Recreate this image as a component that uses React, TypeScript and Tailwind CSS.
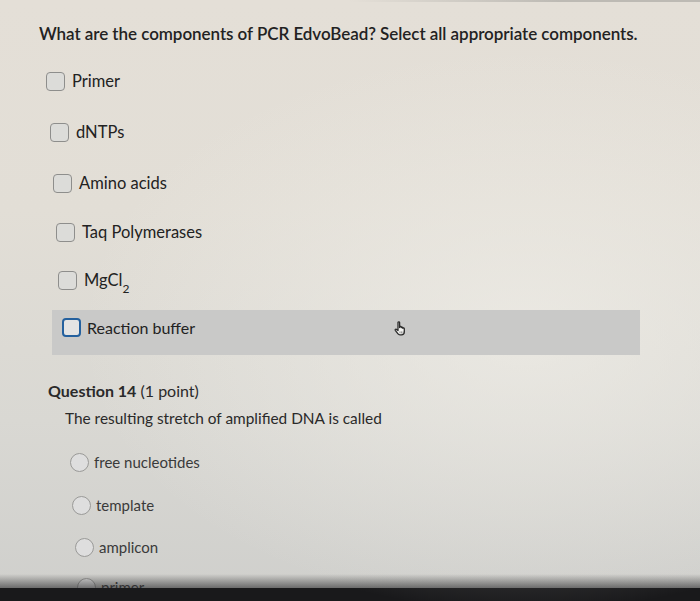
import React from 'react';

type Choice = { label: React.ReactNode; indent: string; gap: string };

const components: Choice[] = [
  { label: 'Primer', indent: 'ml-[46px]', gap: 'mt-[26px]' },
  { label: 'dNTPs', indent: 'ml-[50px]', gap: 'mt-[32px]' },
  { label: 'Amino acids', indent: 'ml-[53px]', gap: 'mt-[32px]' },
  { label: 'Taq Polymerases', indent: 'ml-[56px]', gap: 'mt-[30px]' },
  {
    label: (
      <>
        MgCl<sub className="text-[12px] align-[-4px]">2</sub>
      </>
    ),
    indent: 'ml-[58px]',
    gap: 'mt-[29px]',
  },
];

const answers = [
  { label: 'free nucleotides', indent: 'ml-[70px]', gap: 'mt-[25px]' },
  { label: 'template', indent: 'ml-[72px]', gap: 'mt-[24px]' },
  { label: 'amplicon', indent: 'ml-[75px]', gap: 'mt-[23px]' },
  { label: 'primer', indent: 'ml-[77px]', gap: 'mt-[21px]' },
];

const Checkbox = ({ focused = false }: { focused?: boolean }) => (
  <span
    className={
      focused
        ? 'h-[19px] w-[19px] shrink-0 rounded-[4px] border-2 border-[#24609e] bg-[#e4e4e4]'
        : 'h-[19px] w-[19px] shrink-0 rounded-[4px] border border-[#8e8e8c] bg-[#dcdcd9]'
    }
  />
);

const Radio = () => (
  <span className="h-[19px] w-[19px] shrink-0 rounded-full border border-[#9a9a98] bg-[#dedede]" />
);

// pointing-hand cursor resting on the hovered row
const HandCursor = () => (
  <svg width="14" height="15" viewBox="0 0 14 15" className="absolute left-[394px] top-[319px]">
    <path
      d="M4 1.5c0-.9 1.6-.9 1.6 0v5l.2-.6c.4-.7 1.5-.5 1.5.3v.5c.4-.7 1.5-.6 1.5.2v.4c.4-.6 1.5-.5 1.5.3v3.4c0 1.6-1.2 2.8-2.8 2.8H6c-1 0-1.7-.5-2.2-1.2L1.3 9.3c-.5-.7.3-1.5 1-1L4 9.6V1.5z"
      fill="#f4f4f2"
      stroke="#2b2b2b"
      strokeWidth="1.3"
      strokeLinejoin="round"
    />
    <path d="M6 10.4v2M7.6 10.4v2M9.2 10.4v2" stroke="#666" strokeWidth="0.7" />
  </svg>
);

export default function App() {
  return (
    <div className="relative flex h-[601px] w-[700px] flex-col overflow-hidden bg-[linear-gradient(180deg,#e4dfd7_0%,#e2ded6_35%,#d9d8d3_70%,#cfcfcc_100%)] font-['Lato','Noto_Sans',sans-serif] text-[#2a2a2a]">
      <div className="pointer-events-none absolute inset-0 bg-[radial-gradient(ellipse_at_75%_55%,rgba(240,238,232,0.7),rgba(240,238,232,0)_60%)]" />
      <div className="h-[2px] w-full bg-[linear-gradient(90deg,transparent_50%,#bdbab4_80%)]" />

      <div className="relative h-[586px] overflow-hidden">
        <h1 className="ml-[39px] mt-[20px] text-[17px] font-semibold leading-[24px] tracking-[-0.05px] text-[#222]">
          What are the components of PCR EdvoBead? Select all appropriate components.
        </h1>

        {components.map((c, i) => (
          <div key={i} className={`flex h-[19px] items-center gap-[7px] ${c.indent} ${c.gap}`}>
            <Checkbox />
            <span className="text-[16.5px] leading-none text-[#222]">{c.label}</span>
          </div>
        ))}

        <div className="ml-[52px] mr-[60px] mt-[20px] h-[45px] bg-[#c9c9c8] pl-[10px] pt-[8px]">
          <div className="flex h-[19px] items-center gap-[6px]">
            <Checkbox focused />
            <span className="text-[16px] leading-none text-[#222]">Reaction buffer</span>
          </div>
        </div>

        <p className="ml-[48px] mt-[26px] text-[16px] leading-[20px]">
          <span className="font-bold">Question 14</span> (1 point)
        </p>
        <p className="ml-[65px] mt-[7px] text-[15.4px] leading-[20px]">
          The resulting stretch of amplified DNA is called
        </p>

        {answers.map((a) => (
          <div key={a.label} className={`flex h-[19px] items-center gap-[5px] ${a.indent} ${a.gap}`}>
            <Radio />
            <span className="text-[15px] leading-none text-[#3a3a3a]">{a.label}</span>
          </div>
        ))}

        <HandCursor />
        <div className="pointer-events-none absolute inset-x-0 bottom-0 h-[14px] bg-[linear-gradient(180deg,rgba(40,40,42,0),rgba(40,40,42,0.6))]" />
      </div>

      <div className="flex-1 bg-[#19191b]" />
    </div>
  );
}
